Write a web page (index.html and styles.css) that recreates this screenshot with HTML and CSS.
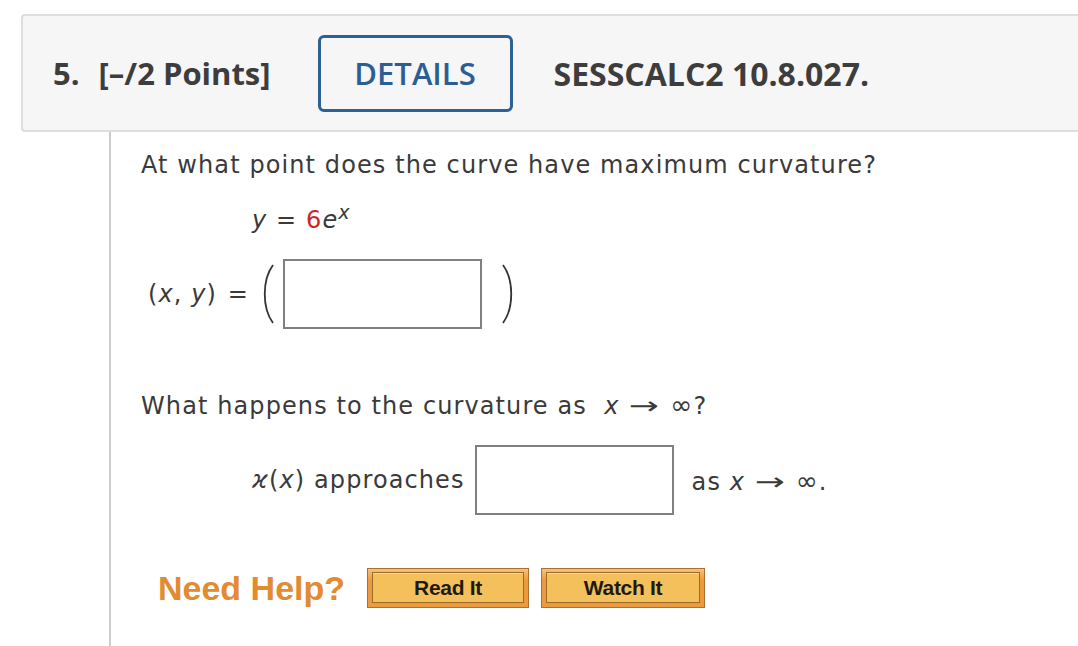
FILE: index.html
```html
<!DOCTYPE html>
<html>
<head>
<meta charset="utf-8">
<link rel="stylesheet" href="styles.css">
</head>
<body>
<div class="question">
  <div class="q-header">
    <span class="q-num">5.</span>
    <span class="q-points">[–/2 Points]</span>
    <span class="details-btn">DETAILS</span>
    <span class="q-code">SESSCALC2 10.8.027.</span>
  </div>
  <div class="q-body">
    <p class="q-text">At what point does the curve have maximum curvature?</p>
    <p class="eq"><i>y</i> <span class="op">=</span> <span class="red">6</span><i>e</i><sup><i>x</i></sup></p>
    <div class="ans-row">
      <span class="ans-label">(<i>x</i>, <i>y</i>) <span class="op">=</span></span>
      <svg class="paren" width="14" height="60" viewBox="0 0 14 60"><path d="M12 1 C1 16 1 44 12 59" fill="none" stroke="#333" stroke-width="1.8"/></svg>
      <span class="ans-box"></span>
      <svg class="paren right" width="14" height="60" viewBox="0 0 14 60"><path d="M2 1 C13 16 13 44 2 59" fill="none" stroke="#333" stroke-width="1.8"/></svg>
    </div>
    <p class="q-text q2">What happens to the curvature as&nbsp; <i>x</i> <span class="arrow">→</span> <span class="inf">∞</span>?</p>
    <div class="ans-row kappa-row">
      <span class="kappa-label"><i>ϰ</i>(<i>x</i>) approaches</span>
      <span class="ans-box"></span>
      <span class="after">as <i>x</i> <span class="arrow">→</span> <span class="inf">∞</span>.</span>
    </div>
    <div class="help-row">
      <span class="need-help">Need Help?</span>
      <span class="help-btn read"><span class="help-inner">Read It</span></span>
      <span class="help-btn watch"><span class="help-inner">Watch It</span></span>
    </div>
  </div>
</div>
</body>
</html>
```
FILE: styles.css
```css
html, body {
  margin: 0;
  padding: 0;
  background: #fff;
  overflow: hidden;
}
body {
  width: 1078px;
  height: 646px;
}
.question {
  padding-top: 14px;
}
.q-header {
  margin-left: 21px;
  margin-right: -20px;
  height: 114px;
  border: 2px solid #dedede;
  border-radius: 4px;
  background: #f6f6f6;
  display: flex;
  align-items: center;
  padding-left: 30px;
  font-family: "Open Sans", sans-serif;
  color: #3d3d3d;
  font-size: 31px;
}
.q-num {
  font-weight: 700;
}
.q-points {
  font-weight: 700;
  margin-left: 19px;
}
.details-btn {
  margin-left: 47px;
  width: 189px;
  height: 71px;
  border: 3px solid #2b6196;
  border-radius: 6px;
  display: flex;
  align-items: center;
  justify-content: center;
  color: #2b5f93;
  font-weight: 600;
  font-size: 31px;
}
.q-code {
  font-weight: 700;
  font-size: 32px;
  margin-left: 41px;
}
.q-body {
  margin-left: 109px;
  border-left: 2px solid #cccccc;
  padding-left: 30px;
  height: 520px;
  padding-top: 17px;
  font-family: "DejaVu Sans", Verdana, sans-serif;
  color: #3a3a3a;
  font-size: 24px;
  letter-spacing: 1.1px;
}
.q-text {
  margin: 0;
  line-height: 32px;
}
.op {
  margin: 0 2px;
}
.eq {
  margin: 23px 0 0 111px;
  line-height: 32px;
}
.eq .op {
  margin: 0;
}
.eq sup {
  font-size: 0.8em;
  line-height: 0;
  vertical-align: 0.45em;
}
.red {
  color: #c8281e;
}
.ans-row {
  margin-top: 23px;
  display: flex;
  align-items: center;
  height: 70px;
}
.ans-label {
  padding-left: 7px;
  margin-right: 10px;
}
.paren {
  display: block;
}
.ans-box {
  display: block;
  width: 195px;
  height: 66px;
  border: 2px solid #808080;
  background: #fff;
  margin-left: 8px;
}
.paren.right {
  margin-left: 19px;
}
.arrow {
  display: inline-block;
  transform: scaleX(1.5);
  margin: 0 6px;
}
.inf {
  font-size: 1.1em;
}
.q2 {
  margin-top: 60px;
}
.kappa-row {
  padding-left: 111px;
}
.kappa-row .ans-box {
  margin-left: 10px;
}
.after {
  margin-left: 18px;
}
.help-row {
  margin-top: 53px;
  display: flex;
  align-items: center;
  height: 40px;
  padding-left: 17px;
  letter-spacing: 0;
}
.need-help {
  font-family: "Liberation Sans", Arial, sans-serif;
  font-weight: 700;
  font-size: 34px;
  color: #e28b31;
  margin-right: 22px;
}
.help-btn {
  display: block;
  height: 40px;
  box-sizing: border-box;
  border: 1px solid #a87332;
  background: linear-gradient(#f5c27a, #ec9a3c 30%, #ec9a3c);
  padding: 3px 4px 4px 4px;
}
.help-btn.read {
  width: 162px;
}
.help-btn.watch {
  width: 164px;
  margin-left: 12px;
}
.help-inner {
  display: flex;
  align-items: center;
  justify-content: center;
  height: 100%;
  box-sizing: border-box;
  border: 1px solid #9b6a2c;
  background: #f3c05b;
  box-shadow: inset 0 1px 0 #f9dc9a;
  font-family: "Liberation Sans", Arial, sans-serif;
  font-weight: 700;
  font-size: 21px;
  color: #1f1a10;
  letter-spacing: -0.3px;
}
```
